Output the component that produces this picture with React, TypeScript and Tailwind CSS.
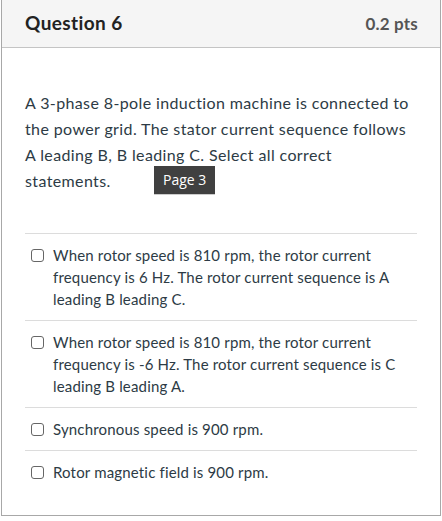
import React from 'react';

const options = [
  ['When rotor speed is 810 rpm, the rotor current', 'frequency is 6 Hz. The rotor current sequence is A', 'leading B leading C.'],
  ['When rotor speed is 810 rpm, the rotor current', 'frequency is -6 Hz. The rotor current sequence is C', 'leading B leading A.'],
  ['Synchronous speed is 900 rpm.'],
  ['Rotor magnetic field is 900 rpm.'],
];

const question = [
  'A 3-phase 8-pole induction machine is connected to',
  'the power grid. The stator current sequence follows',
  'A leading B, B leading C. Select all correct',
  'statements.',
];

export default function App() {
  return (
    <div className="w-[442px] h-[521px] bg-white" style={{ fontFamily: 'Lato, "Open Sans", sans-serif' }}>
      <div className="ml-[1px] w-[440px] border-x border-b border-[#a8a8a8] text-[#2d3b45]">
        {/* header */}
        <div className="h-[48px] bg-[#f5f5f5] border-b border-[#c4c4c4] flex items-center justify-between pl-[23px] pr-[22px]">
          <h2 className="text-[19px] font-bold tracking-[0.4px] text-[#222]">Question 6</h2>
          <span className="text-[17px] font-bold tracking-[0.2px] text-[#555]">0.2 pts</span>
        </div>

        {/* body */}
        <div className="pt-[42px] pb-[22px] px-[23px]">
          <div className="relative">
            <p className="text-[16px] leading-[26px] tracking-[0.38px] whitespace-nowrap">
              {question.map((l) => (
                <span key={l} className="block">{l}</span>
              ))}
            </p>
            <div
              className="absolute left-[129px] top-[76px] h-[29px] px-[9px] bg-[#404040] text-white text-[14px] leading-[28px] border-b border-[#ccc]"
              style={{ fontFamily: '"Open Sans", sans-serif' }}
            >
              Page 3
            </div>
          </div>

          <div className="mt-[39px]">
            {options.map((o) => (
              <label key={o[0] + o.length} className="flex items-start gap-[9px] border-t border-[#dcdcdc] py-[10px] pl-[6px] text-[15px] leading-[22px] tracking-[0.17px]">
                <span className="mt-[5px] w-[13px] h-[13px] shrink-0 rounded-[3px] border border-[#666] bg-white" />
                <span className="whitespace-nowrap">
                  {o.map((l) => (
                    <span key={l} className="block">{l}</span>
                  ))}
                </span>
              </label>
            ))}
          </div>
        </div>
      </div>
    </div>
  );
}
